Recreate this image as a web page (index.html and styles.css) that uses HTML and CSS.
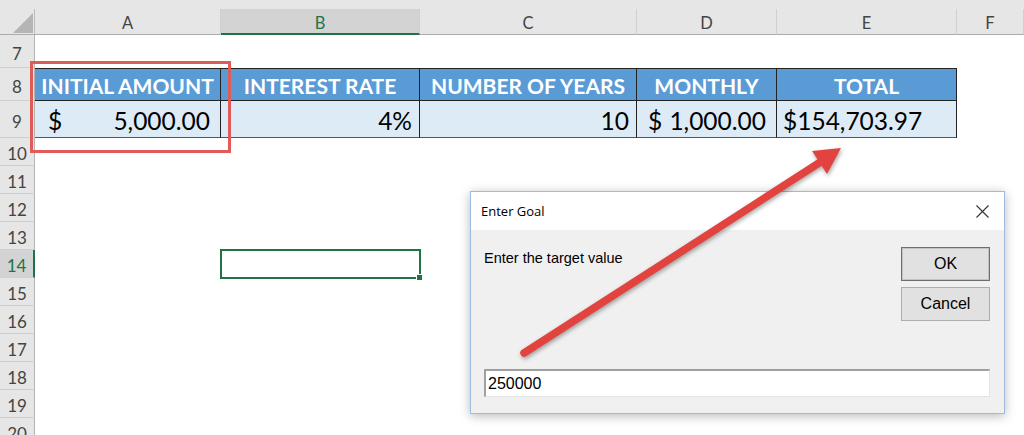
FILE: index.html
```html
<!DOCTYPE html>
<html lang="en">
<head>
    <meta charset="UTF-8">
    <meta name="viewport" content="width=device-width, initial-scale=1.0">
    <title>Enter Goal - Savings Calculator</title>
    <link rel="stylesheet" href="styles.css">
</head>
<body>
    <div class="sheet">
        <div class="ribbon-edge"></div>

        <div class="grid">
            <!-- column headers -->
            <div class="corner">
                <svg width="20" height="20" viewBox="0 0 20 20"><polygon points="20,0 20,20 0,20" fill="#b5b5b5"/></svg>
            </div>
            <div class="col-head">A</div>
            <div class="col-head selected">B</div>
            <div class="col-head">C</div>
            <div class="col-head">D</div>
            <div class="col-head">E</div>
            <div class="col-head">F</div>

            <div class="row-head">7</div>
            <div class="blank"></div>

            <div class="row-head">8</div>
            <div class="th">INITIAL AMOUNT</div>
            <div class="th">INTEREST RATE</div>
            <div class="th">NUMBER OF YEARS</div>
            <div class="th">MONTHLY</div>
            <div class="th">TOTAL</div>
            <div class="cell"></div>

            <div class="row-head">9</div>
            <div class="td acct"><span>$</span><span>5,000.00</span></div>
            <div class="td num">4%</div>
            <div class="td num">10</div>
            <div class="td acct monthly"><span>$</span><span>1,000.00</span></div>
            <div class="td cur">$154,703.97</div>
            <div class="cell"></div>

            <div class="row-head">10</div>
            <div class="blank"></div>
            <div class="row-head">11</div>
            <div class="blank"></div>
            <div class="row-head">12</div>
            <div class="blank"></div>
            <div class="row-head">13</div>
            <div class="blank"></div>

            <div class="row-head selected">14</div>
            <div class="cell"></div>
            <div class="cell active"><span class="fill-handle"></span></div>
            <div class="blank-rest"></div>

            <div class="row-head">15</div>
            <div class="blank"></div>
            <div class="row-head">16</div>
            <div class="blank"></div>
            <div class="row-head">17</div>
            <div class="blank"></div>
            <div class="row-head">18</div>
            <div class="blank"></div>
            <div class="row-head">19</div>
            <div class="blank"></div>
            <div class="row-head">20</div>
            <div class="blank"></div>
        </div>

        <div class="callout"></div>

        <div class="dialog">
            <div class="dialog-title">
                <span>Enter Goal</span>
                <svg class="close" width="13" height="13" viewBox="0 0 13 13">
                    <path d="M0.5 0.5 L12.5 12.5 M12.5 0.5 L0.5 12.5" stroke="#333" stroke-width="1.1" fill="none"/>
                </svg>
            </div>
            <div class="dialog-body">
                <div class="dialog-top">
                    <div class="prompt">Enter the target value</div>
                    <div class="buttons">
                        <button class="btn btn-default">OK</button>
                        <button class="btn">Cancel</button>
                    </div>
                </div>
                <input class="goal-input" type="text" value="250000">
            </div>
        </div>

        <svg class="arrow" width="1024" height="435" viewBox="0 0 1024 435">
            <g class="arrow-shape">
                <line x1="524" y1="353" x2="822" y2="161" stroke="#e2433f" stroke-width="7.5" stroke-linecap="round"/>
                <polygon points="841,148 812,151 827,174" fill="#e2433f"/>
            </g>
        </svg>
    </div>
</body>
</html>
```

FILE: styles.css
```css
* { margin: 0; padding: 0; box-sizing: border-box; }
body {
    width: 1024px;
    height: 435px;
    overflow: hidden;
    background: #fff;
    color: #000;
    font-family: Lato, "Liberation Sans", sans-serif;
}
.sheet {
    position: relative;
    width: 1024px;
    height: 435px;
    overflow: hidden;
}
.ribbon-edge {
    height: 9px;
    background: #e6e6e6;
}
.grid {
    display: grid;
    grid-template-columns: 35px 186px 199px 217px 140px 180px 67px;
    grid-template-rows: 26px 33px 33px 37px repeat(11, 28px);
}

/* headers */
.corner {
    background: #e6e6e6;
    border-right: 1px solid #bcbcbc;
    border-bottom: 1px solid #ababab;
    display: flex;
    align-items: flex-end;
    justify-content: flex-end;
    padding: 0 1px 1px 0;
}
.col-head {
    background: #e6e6e6;
    border-right: 1px solid #d0d0d0;
    border-bottom: 1px solid #ababab;
    color: #444;
    font-size: 16.5px;
    padding-top: 3px;
    display: flex;
    align-items: center;
    justify-content: center;
}
.col-head.selected {
    background: #d3d3d3;
    color: #217346;
    border-bottom: 2px solid #217346;
}
.row-head {
    background: #e6e6e6;
    border-right: 1px solid #b4b4b4;
    border-bottom: 1px solid #cfcfcf;
    color: #444;
    font-size: 17px;
    padding-top: 4px;
    display: flex;
    align-items: center;
    justify-content: center;
}
.row-head.selected {
    background: #d3d3d3;
    color: #217346;
    border-right: 2px solid #217346;
}
.blank { grid-column: 2 / -1; }
.blank-rest { grid-column: 4 / -1; }

/* table */
.th {
    background: #5b9bd5;
    color: #fff;
    font-weight: 700;
    font-size: 21px;
    white-space: nowrap;
    border-top: 1px solid #222;
    border-right: 1px solid #222;
    border-bottom: 1px solid #222;
    padding-top: 2px;
    display: flex;
    align-items: center;
    justify-content: center;
}
.td {
    background: #ddebf7;
    font-size: 24.5px;
    white-space: nowrap;
    border-right: 1px solid #222;
    border-bottom: 1px solid #555;
    padding: 2px 7px 0 7px;
    display: flex;
    align-items: center;
    justify-content: flex-end;
}
.td.acct {
    justify-content: space-between;
    padding: 2px 10px 0 13px;
}
.td.monthly { padding-left: 11px; }
.td.cur {
    justify-content: flex-start;
    padding-left: 6px;
}
.active {
    position: relative;
    outline: 2px solid #217346;
    outline-offset: -1px;
}
.fill-handle {
    position: absolute;
    right: -3px;
    bottom: -3px;
    width: 7px;
    height: 7px;
    background: #217346;
    border: 1px solid #fff;
}

/* red highlight box */
.callout {
    position: absolute;
    left: 30px;
    top: 61px;
    width: 201px;
    height: 92px;
    border: 3px solid #e05b58;
}

/* input box dialog */
.dialog {
    position: absolute;
    left: 470px;
    top: 191px;
    width: 535px;
    height: 223px;
    background: #f0f0f0;
    border: 1px solid #9bbbe0;
    box-shadow: 0 2px 10px rgba(0,0,0,0.28);
    display: flex;
    flex-direction: column;
}
.dialog-title {
    height: 38px;
    background: #fff;
    padding: 0 15px 0 10px;
    font-family: "Open Sans", sans-serif;
    font-size: 13px;
    color: #000;
    display: flex;
    align-items: center;
    justify-content: space-between;
}
.dialog-body {
    flex: 1;
    padding: 17px 14px 16px 13px;
    display: flex;
    flex-direction: column;
}
.dialog-top {
    display: flex;
    justify-content: space-between;
}
.prompt {
    margin-top: 3px;
    font-family: "Liberation Sans", sans-serif;
    font-size: 14.5px;
    line-height: 17px;
}
.buttons {
    display: flex;
    flex-direction: column;
    gap: 6px;
}
.btn {
    width: 89px;
    height: 34px;
    background: #e1e1e1;
    border: 1px solid #adadad;
    font-family: "Liberation Sans", sans-serif;
    font-size: 16px;
    color: #000;
}
.btn-default {
    border-color: #6e6e6e;
    box-shadow: inset 0 0 0 1px #c4c4c4;
}
.goal-input {
    margin-top: auto;
    width: 100%;
    height: 28px;
    background: #fff;
    border-top: 2px solid #a0a0a0;
    border-left: 2px solid #a0a0a0;
    border-right: 1px solid #e3e3e3;
    border-bottom: 1px solid #e3e3e3;
    padding: 0 2px;
    font-family: "Liberation Sans", sans-serif;
    font-size: 16px;
    color: #000;
    outline: none;
}

/* annotation arrow */
.arrow {
    position: absolute;
    left: 0;
    top: 0;
    pointer-events: none;
}
.arrow-shape {
    filter: drop-shadow(1px 2px 2px rgba(0,0,0,0.35));
}
```
